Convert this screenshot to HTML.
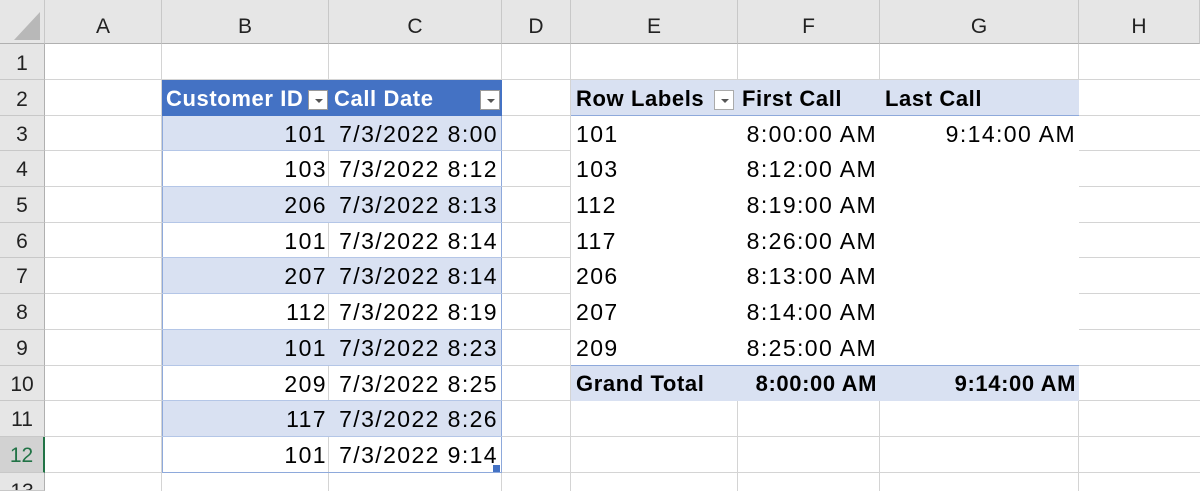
<!DOCTYPE html>
<html><head><meta charset="utf-8"><style>
*{margin:0;padding:0;box-sizing:border-box}
html,body{width:1200px;height:491px;overflow:hidden}
body{background:#fff;font-family:"Liberation Sans",Carlito,sans-serif;position:relative;color:#000}
.a{position:absolute}
.vl{position:absolute;top:44px;width:1px;height:447px;background:#d4d4d4}
.hl{position:absolute;left:0;height:1px;width:1200px;background:#d4d4d4}
.ch{position:absolute;top:0;height:44px;background:#e6e6e6;border-right:1px solid #c8c8c8;border-bottom:1px solid #b0b0b0;font-size:21px;text-align:center;line-height:54px;color:#222}
.rh{position:absolute;left:0;width:45px;background:#e6e6e6;border-bottom:1px solid #c8c8c8;border-right:1px solid #b0b0b0;font-size:21px;text-align:center;color:#222}
.t{position:absolute;font-size:23px;letter-spacing:1.4px;line-height:36px;white-space:nowrap}
.b{font-weight:bold;font-size:22px;letter-spacing:0.6px}
.dd{position:absolute;width:20px;height:20px;background:#fff;border:1px solid #999}
.dd:after{content:"";position:absolute;left:6px;top:8px;border-left:4px solid transparent;border-right:4px solid transparent;border-top:4px solid #555}
</style></head><body>
<div class="ch" style="left:0;width:45px"><svg width="45" height="44" style="position:absolute;left:0;top:0"><polygon points="40,12 40,40 14,40" fill="#b8b8b8"/></svg></div>
<div class="ch" style="left:45px;width:117px">A</div>
<div class="ch" style="left:162px;width:167px">B</div>
<div class="ch" style="left:329px;width:173px">C</div>
<div class="ch" style="left:502px;width:69px">D</div>
<div class="ch" style="left:571px;width:167px">E</div>
<div class="ch" style="left:738px;width:142px">F</div>
<div class="ch" style="left:880px;width:199px">G</div>
<div class="ch" style="left:1079px;width:121px">H</div>

<div class="vl" style="left:161px"></div><div class="vl" style="left:328px"></div><div class="vl" style="left:501px"></div><div class="vl" style="left:570px"></div><div class="vl" style="left:737px"></div><div class="vl" style="left:879px"></div><div class="vl" style="left:1078px"></div>
<div class="hl" style="top:79px"></div><div class="hl" style="top:115px"></div><div class="hl" style="top:150px"></div><div class="hl" style="top:186px"></div><div class="hl" style="top:222px"></div><div class="hl" style="top:257px"></div><div class="hl" style="top:293px"></div><div class="hl" style="top:329px"></div><div class="hl" style="top:365px"></div><div class="hl" style="top:400px"></div><div class="hl" style="top:436px"></div><div class="hl" style="top:472px"></div>

<div class="rh" style="top:44px;height:36px;line-height:40px">1</div>
<div class="rh" style="top:80px;height:36px;line-height:40px">2</div>
<div class="rh" style="top:116px;height:35px;line-height:38px">3</div>
<div class="rh" style="top:151px;height:36px;line-height:38px">4</div>
<div class="rh" style="top:187px;height:36px;line-height:38px">5</div>
<div class="rh" style="top:223px;height:35px;line-height:38px">6</div>
<div class="rh" style="top:258px;height:36px;line-height:38px">7</div>
<div class="rh" style="top:294px;height:36px;line-height:38px">8</div>
<div class="rh" style="top:330px;height:36px;line-height:38px">9</div>
<div class="rh" style="top:366px;height:35px;line-height:38px">10</div>
<div class="rh" style="top:401px;height:36px;line-height:38px">11</div>
<div class="rh" style="top:437px;height:36px;line-height:38px;background:#d2d2d2;color:#217346;border-right:2px solid #217346">12</div>
<div class="rh" style="top:473px;height:18px;line-height:38px;overflow:hidden">13</div>

<div class="a" style="left:162px;top:80px;width:340px;height:36px;background:#4472c4"></div>
<div class="a" style="left:162px;top:116px;width:340px;height:35px;background:#d9e1f2"></div>
<div class="a" style="left:162px;top:187px;width:340px;height:36px;background:#d9e1f2"></div>
<div class="a" style="left:162px;top:258px;width:340px;height:36px;background:#d9e1f2"></div>
<div class="a" style="left:162px;top:330px;width:340px;height:36px;background:#d9e1f2"></div>
<div class="a" style="left:162px;top:401px;width:340px;height:36px;background:#d9e1f2"></div>
<div class="a" style="left:162px;top:116px;width:340px;height:357px;border:1px solid #8ea9db;border-top:none"></div>
<div class="hl" style="top:150px;left:162px;width:340px;background:#b4c6e7"></div><div class="hl" style="top:186px;left:162px;width:340px;background:#b4c6e7"></div><div class="hl" style="top:222px;left:162px;width:340px;background:#b4c6e7"></div><div class="hl" style="top:257px;left:162px;width:340px;background:#b4c6e7"></div><div class="hl" style="top:293px;left:162px;width:340px;background:#b4c6e7"></div><div class="hl" style="top:329px;left:162px;width:340px;background:#b4c6e7"></div><div class="hl" style="top:365px;left:162px;width:340px;background:#b4c6e7"></div><div class="hl" style="top:400px;left:162px;width:340px;background:#b4c6e7"></div><div class="hl" style="top:436px;left:162px;width:340px;background:#b4c6e7"></div>
<div class="t b" style="left:166px;top:81px;color:#fff">Customer ID</div>
<div class="dd" style="left:308px;top:90px"></div>
<div class="t b" style="left:334px;top:81px;color:#fff">Call Date</div>
<div class="dd" style="left:480px;top:90px"></div>
<div class="a" style="left:493px;top:465px;width:7px;height:7px;background:#4472c4"></div>

<div class="t" style="right:873px;top:116px">101</div><div class="t" style="right:702px;top:116px">7/3/2022 8:00</div>
<div class="t" style="right:873px;top:151px">103</div><div class="t" style="right:702px;top:151px">7/3/2022 8:12</div>
<div class="t" style="right:873px;top:187px">206</div><div class="t" style="right:702px;top:187px">7/3/2022 8:13</div>
<div class="t" style="right:873px;top:223px">101</div><div class="t" style="right:702px;top:223px">7/3/2022 8:14</div>
<div class="t" style="right:873px;top:258px">207</div><div class="t" style="right:702px;top:258px">7/3/2022 8:14</div>
<div class="t" style="right:873px;top:294px">112</div><div class="t" style="right:702px;top:294px">7/3/2022 8:19</div>
<div class="t" style="right:873px;top:330px">101</div><div class="t" style="right:702px;top:330px">7/3/2022 8:23</div>
<div class="t" style="right:873px;top:366px">209</div><div class="t" style="right:702px;top:366px">7/3/2022 8:25</div>
<div class="t" style="right:873px;top:401px">117</div><div class="t" style="right:702px;top:401px">7/3/2022 8:26</div>
<div class="t" style="right:873px;top:437px">101</div><div class="t" style="right:702px;top:437px">7/3/2022 9:14</div>

<div class="a" style="left:571px;top:116px;width:508px;height:250px;background:#fff"></div>
<div class="a" style="left:571px;top:80px;width:508px;height:36px;background:#d9e1f2;border-bottom:1px solid #8ea9db"></div>
<div class="a" style="left:571px;top:365px;width:508px;height:36px;background:#d9e1f2;border-top:1px solid #8ea9db"></div>
<div class="t b" style="left:576px;top:81px">Row Labels</div>
<div class="dd" style="left:714px;top:90px;border-color:#aaa"></div>
<div class="t b" style="left:742px;top:81px">First Call</div>
<div class="t b" style="left:885px;top:81px">Last Call</div>
<div class="t" style="left:576px;top:116px">101</div><div class="t" style="right:323px;top:116px">8:00:00 AM</div><div class="t" style="right:124px;top:116px">9:14:00 AM</div>
<div class="t" style="left:576px;top:151px">103</div><div class="t" style="right:323px;top:151px">8:12:00 AM</div>
<div class="t" style="left:576px;top:187px">112</div><div class="t" style="right:323px;top:187px">8:19:00 AM</div>
<div class="t" style="left:576px;top:223px">117</div><div class="t" style="right:323px;top:223px">8:26:00 AM</div>
<div class="t" style="left:576px;top:258px">206</div><div class="t" style="right:323px;top:258px">8:13:00 AM</div>
<div class="t" style="left:576px;top:294px">207</div><div class="t" style="right:323px;top:294px">8:14:00 AM</div>
<div class="t" style="left:576px;top:330px">209</div><div class="t" style="right:323px;top:330px">8:25:00 AM</div>
<div class="t b" style="left:576px;top:366px">Grand Total</div><div class="t b" style="right:323px;top:366px">8:00:00 AM</div><div class="t b" style="right:124px;top:366px">9:14:00 AM</div>
</body></html>
